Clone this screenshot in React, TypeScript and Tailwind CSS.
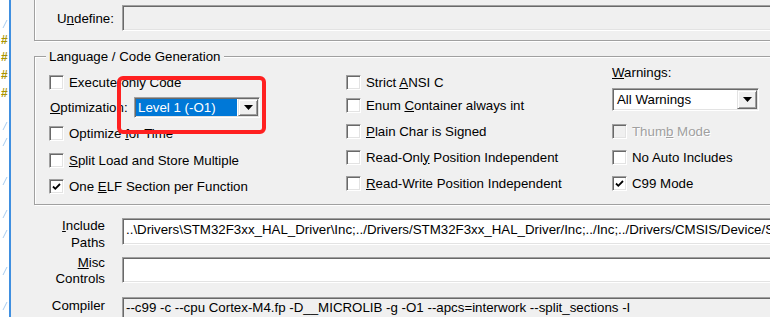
import React from "react";

const sunken =
  "border border-t-[#a0a0a0] border-l-[#a0a0a0] border-b-white border-r-white shadow-[inset_1px_1px_0_#696969,inset_-1px_-1px_0_#e3e3e3]";
const raised =
  "border border-t-[#e3e3e3] border-l-[#e3e3e3] border-b-[#696969] border-r-[#696969] shadow-[inset_1px_1px_0_#fff,inset_-1px_-1px_0_#a0a0a0]";
const etched =
  "border border-[#a0a0a0] shadow-[inset_1px_1px_0_#fff,1px_1px_0_#fff]";

function Check({ checked = false, disabled = false }: { checked?: boolean; disabled?: boolean }) {
  return (
    <span
      className={`w-[15px] h-[15px] shrink-0 flex items-center justify-center ${sunken} ${
        disabled ? "bg-[#f0f0f0]" : "bg-white"
      }`}
    >
      {checked && (
        <svg width="11" height="11" viewBox="0 0 11 11">
          <path d="M2 5.5 L4.3 7.8 L9 3" stroke="#000" strokeWidth="1.8" fill="none" />
        </svg>
      )}
    </span>
  );
}

function Row({
  children,
  checked,
  disabled,
  className = "",
}: {
  children: React.ReactNode;
  checked?: boolean;
  disabled?: boolean;
  className?: string;
}) {
  return (
    <div className={`flex items-center h-[20px] ${className}`}>
      <Check checked={checked} disabled={disabled} />
      <span
        className={`ml-[5px] whitespace-nowrap ${
          disabled ? "text-[#a0a0a0] [text-shadow:1px_1px_0_#fff]" : ""
        }`}
      >
        {children}
      </span>
    </div>
  );
}

function DropButton() {
  return (
    <span className={`w-[20px] h-full shrink-0 bg-[#f0f0f0] flex items-center justify-center ${raised}`}>
      <svg width="9" height="5" viewBox="0 0 9 5">
        <path d="M0 0 H9 L4.5 5 Z" fill="#000" />
      </svg>
    </span>
  );
}

function Gutter() {
  const slashes = [20, 122, 138, 177, 210, 230, 267, 302];
  const hashes = [34, 51, 69, 87];
  return (
    <div className="relative w-[11px] h-full shrink-0 bg-white border-r-2 border-[#3f8fe0]">
      <svg className="absolute left-0 top-0" width="9" height="317">
        {slashes.map((y) => (
          <path key={y} d={`M3 ${y + 8} L7 ${y}`} stroke="#a9cdf0" strokeWidth="1" />
        ))}
      </svg>
      {hashes.map((y) => (
        <span
          key={y}
          className="absolute left-[1px] text-[12px] leading-[12px] font-bold text-[#a89400]"
          style={{ top: y }}
        >
          #
        </span>
      ))}
    </div>
  );
}

export default function App() {
  return (
    <div className="relative w-[770px] h-[317px] overflow-hidden bg-[#f0f0f0] flex font-['Liberation_Sans',Arial,sans-serif] text-[13.3px] leading-[15px] text-black">
      <Gutter />

      <div className="flex-1 flex flex-col min-w-0">
        {/* Define / Undefine group (top cut off) */}
        <div className={`ml-[23px] -mt-[20px] h-[61px] w-[800px] shrink-0 ${etched}`}>
          <div className="flex items-center mt-[24px]">
            <span className="ml-[22px] w-[65px] shrink-0">
              U<u>n</u>define:
            </span>
            <div className={`h-[26px] w-[700px] shrink-0 bg-[#f0f0f0] ${sunken}`} />
          </div>
        </div>

        {/* Language / Code Generation */}
        <div className={`relative ml-[23px] mt-[15px] h-[149px] w-[800px] shrink-0 ${etched}`}>
          <span className="absolute -top-[8px] left-[11px] px-[3px] bg-[#f0f0f0] whitespace-nowrap">
            Language / Code Generation
          </span>
          <div className="flex">
            <div className="ml-[14px] w-[297px] shrink-0 pt-[15px] flex flex-col">
              <Row>Execute-only Code</Row>
              <div className="flex items-center h-[20px] mt-[5px]">
                <span className="ml-[1px] w-[84px] shrink-0">
                  <u>O</u>ptimization:
                </span>
                <div className={`h-[21px] w-[126px] shrink-0 bg-white flex p-[1px] ${sunken}`}>
                  <span className="flex-1 bg-[#0078d7] text-white pl-[2px] leading-[17px] mr-[1px] whitespace-nowrap">
                    Level 1 (-O1)
                  </span>
                  <DropButton />
                </div>
              </div>
              <Row className="mt-[6px]">
                Optimize <u>f</u>or Time
              </Row>
              <Row className="mt-[7px]">
                <u>S</u>plit Load and Store Multiple
              </Row>
              <Row className="mt-[6px]" checked>
                One <u>E</u>LF Section per Function
              </Row>
            </div>

            <div className="w-[266px] shrink-0 pt-[15px] flex flex-col">
              <Row>
                Strict <u>A</u>NSI C
              </Row>
              <Row className="mt-[3px]">
                Enum <u>C</u>ontainer always int
              </Row>
              <Row className="mt-[6px]">
                <u>P</u>lain Char is Signed
              </Row>
              <Row className="mt-[6px]">
                Read-Onl<u>y</u> Position Independent
              </Row>
              <Row className="mt-[6px]">
                <u>R</u>ead-Write Position Independent
              </Row>
            </div>

            <div className="pt-[9px] flex flex-col shrink-0">
              <span className="h-[14px] leading-[14px]">
                <u>W</u>arnings:
              </span>
              <div className={`mt-[8px] h-[23px] w-[147px] bg-white flex p-[1px] ${sunken}`}>
                <span className="flex-1 pl-[3px] leading-[19px] whitespace-nowrap">All Warnings</span>
                <DropButton />
              </div>
              <Row className="mt-[10px]" disabled>
                Thum<u>b</u> Mode
              </Row>
              <Row className="mt-[6px]">No Auto Includes</Row>
              <Row className="mt-[6px]" checked>
                C99 Mode
              </Row>
            </div>
          </div>
        </div>

        {/* Bottom fields */}
        <div className="flex items-start h-[27px] mt-[13px] shrink-0">
          <span className="w-[94px] shrink-0 text-right leading-[17px] -mt-[1px]">
            <u>I</u>nclude
            <br />
            Paths
          </span>
          <div className={`ml-[17px] h-[27px] w-[700px] shrink-0 bg-white px-[3px] pt-[3px] whitespace-nowrap overflow-hidden ${sunken}`}>
            ..\Drivers\STM32F3xx_HAL_Driver\Inc;../Drivers/STM32F3xx_HAL_Driver/Inc;../Inc;../Drivers/CMSIS/Device/ST/STM32F3xx/Include
          </div>
        </div>

        <div className="flex items-start h-[26px] mt-[12px] shrink-0">
          <span className="w-[94px] shrink-0 text-right leading-[16px] -mt-[2px]">
            <u>M</u>isc
            <br />
            Controls
          </span>
          <div className={`ml-[17px] h-[26px] w-[700px] shrink-0 bg-white ${sunken}`} />
        </div>

        <div className="flex items-start h-[40px] mt-[14px] shrink-0">
          <span className="w-[94px] shrink-0 text-right leading-[17px]">Compiler</span>
          <div className={`ml-[17px] h-[40px] w-[700px] shrink-0 bg-[#f0f0f0] px-[3px] pt-[2px] whitespace-nowrap overflow-hidden ${sunken}`}>
            --c99 -c --cpu Cortex-M4.fp -D__MICROLIB -g -O1 --apcs=interwork --split_sections -I
          </div>
        </div>
      </div>

      {/* red annotation box */}
      <div className="absolute left-[117px] top-[76px] w-[149px] h-[58px] border-4 border-[#ff2020] rounded-[6px]" />
    </div>
  );
}
